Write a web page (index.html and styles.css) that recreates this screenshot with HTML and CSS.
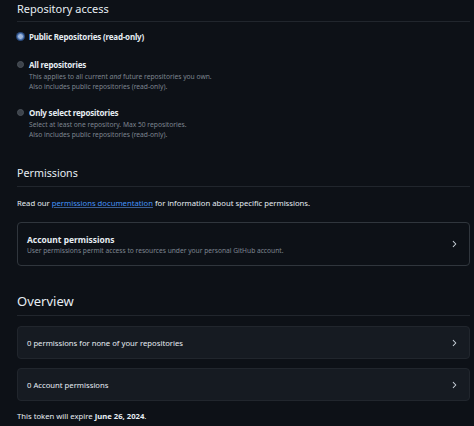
FILE: index.html
```html
<!DOCTYPE html>
<html>
<head>
<meta charset="utf-8">
<link rel="stylesheet" href="styles.css">
</head>
<body>
<main class="page">
  <h2 class="heading">Repository access</h2>
  <div class="radios">
    <div class="radio-row first">
      <span class="radio checked"></span>
      <div class="radio-text">
        <div class="radio-label">Public Repositories (read-only)</div>
      </div>
    </div>
    <div class="radio-row second">
      <span class="radio"></span>
      <div class="radio-text">
        <div class="radio-label">All repositories</div>
        <div class="radio-note">This applies to all current <em>and</em> future repositories you own.</div>
        <div class="radio-note">Also includes public repositories (read-only).</div>
      </div>
    </div>
    <div class="radio-row third">
      <span class="radio"></span>
      <div class="radio-text">
        <div class="radio-label">Only select repositories</div>
        <div class="radio-note">Select at least one repository. Max 50 repositories.</div>
        <div class="radio-note">Also includes public repositories (read-only).</div>
      </div>
    </div>
  </div>

  <h2 class="heading perm-heading">Permissions</h2>
  <p class="intro">Read our <a href="#" class="link">permissions documentation</a> for information about specific permissions.</p>
  <div class="card account-card">
    <div class="card-body">
      <div class="card-title">Account permissions</div>
      <div class="card-desc">User permissions permit access to resources under your personal GitHub account.</div>
    </div>
    <svg class="chevron" viewBox="0 0 16 16" width="10" height="10"><path fill="currentColor" d="M6.22 3.22a.75.75 0 0 1 1.06 0l4.25 4.25a.75.75 0 0 1 0 1.06l-4.25 4.25a.751.751 0 0 1-1.042-.018.751.751 0 0 1-.018-1.042L9.94 8 6.22 4.28a.75.75 0 0 1 0-1.06Z"/></svg>
  </div>

  <h2 class="heading overview-heading">Overview</h2>
  <div class="summary">
    <div class="summary-row">
      <span class="summary-text">0 permissions for none of your repositories</span>
      <svg class="chevron" viewBox="0 0 16 16" width="10" height="10"><path fill="currentColor" d="M6.22 3.22a.75.75 0 0 1 1.06 0l4.25 4.25a.75.75 0 0 1 0 1.06l-4.25 4.25a.751.751 0 0 1-1.042-.018.751.751 0 0 1-.018-1.042L9.94 8 6.22 4.28a.75.75 0 0 1 0-1.06Z"/></svg>
    </div>
    <div class="summary-row">
      <span class="summary-text">0 Account permissions</span>
      <svg class="chevron" viewBox="0 0 16 16" width="10" height="10"><path fill="currentColor" d="M6.22 3.22a.75.75 0 0 1 1.06 0l4.25 4.25a.75.75 0 0 1 0 1.06l-4.25 4.25a.751.751 0 0 1-1.042-.018.751.751 0 0 1-.018-1.042L9.94 8 6.22 4.28a.75.75 0 0 1 0-1.06Z"/></svg>
    </div>
  </div>
  <p class="expiry">This token will expire <strong>June 26, 2024</strong>.</p>
</main>
</body>
</html>
```

FILE: styles.css
```css
html, body {
  margin: 0;
  padding: 0;
  background: #0d1117;
}
body {
  font-family: "Noto Sans", "Open Sans", sans-serif;
  color: #e6edf3;
}
.page {
  padding: 0 4px 0 17px;
}
.heading {
  margin: 0;
  font-weight: 400;
  font-size: 11px;
  line-height: 18px;
  padding-bottom: 3px;
  border-bottom: 1px solid #21262d;
  color: #e6edf3;
}
.radios {
  margin-top: 9px;
}
.radio-row {
  display: flex;
  align-items: flex-start;
}
.radio-row.second {
  margin-top: 16px;
}
.radio-row.third {
  margin-top: 15px;
}
.radio {
  width: 7px;
  height: 7px;
  border-radius: 50%;
  background: #3d434b;
  border: 1px solid #4b525a;
  box-sizing: border-box;
  margin: 2px 5px 0 0;
  flex: none;
}
.radio.checked {
  background: #9fb7da;
  border: 1px solid #4d76b8;
  box-shadow: 0 0 0 1px #2a4a7a;
}
.radio-label {
  font-size: 8px;
  letter-spacing: -0.2px;
  font-weight: 700;
  line-height: 12px;
}
.radio-note {
  font-size: 6.7px;
  line-height: 10px;
  color: #7d8590;
}
.radio-label + .radio-note {
  margin-top: 1px;
}
.radio-note em {
  font-style: italic;
}
.perm-heading {
  margin-top: 24px;
  font-size: 10.7px;
  padding-bottom: 4px;
}
.intro {
  margin: 10px 0 0;
  font-size: 7.7px;
  line-height: 12px;
}
.link {
  color: #4493f8;
  text-decoration: underline;
  text-decoration-color: #3b5f94;
}
.card {
  display: flex;
  align-items: center;
  border: 1px solid #30363d;
  border-radius: 4px;
}
.account-card {
  margin-top: 13px;
  height: 44px;
  box-sizing: border-box;
  padding: 0 10px 0 9px;
}
.card-body {
  flex: 1;
  padding-top: 1px;
}
.card-title {
  font-size: 8.45px;
  font-weight: 700;
  line-height: 12px;
}
.card-desc {
  font-size: 6.65px;
  line-height: 10px;
  color: #7d8590;
}
.chevron {
  flex: none;
  color: #c9d1d9;
}
.overview-heading {
  margin-top: 25px;
  font-size: 13px;
  line-height: 20px;
  padding-bottom: 4px;
}
.summary {
  margin-top: 10px;
  display: flex;
  flex-direction: column;
  gap: 9px;
}
.summary-row {
  display: flex;
  align-items: center;
  justify-content: space-between;
  height: 33px;
  box-sizing: border-box;
  padding: 0 10px 0 9px;
  background: #161b22;
  border: 1px solid #21262d;
  border-radius: 4px;
}
.summary-text {
  font-size: 7.7px;
  line-height: 12px;
}
.expiry {
  margin: 9px 0 0;
  font-size: 7.7px;
  line-height: 12px;
}
.expiry strong {
  font-weight: 700;
}
```
